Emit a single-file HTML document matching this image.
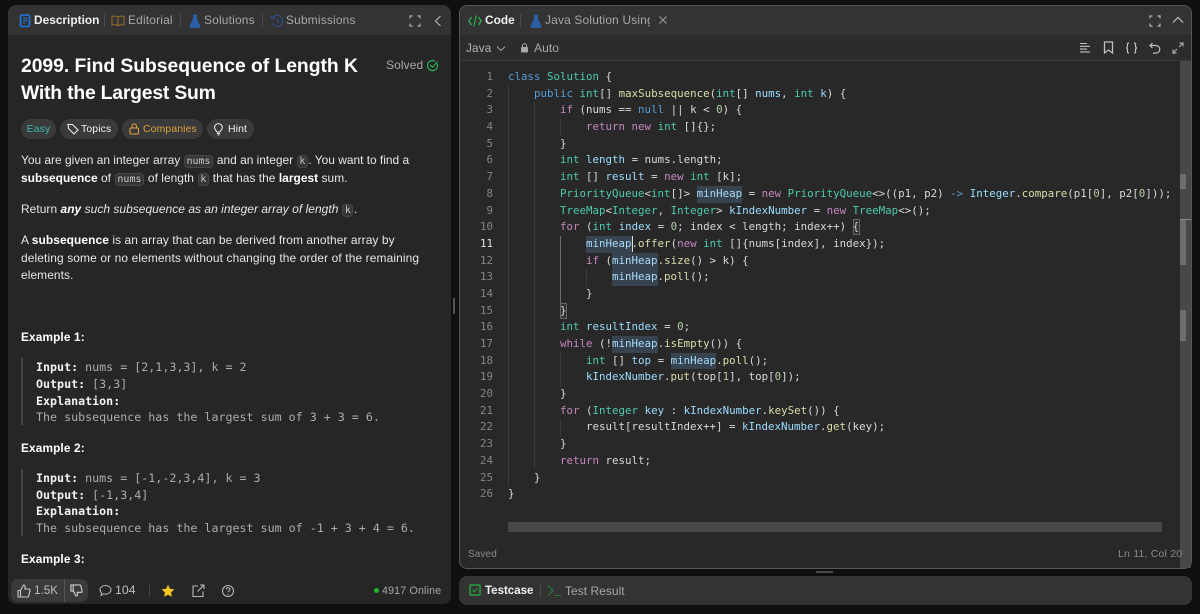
<!DOCTYPE html>
<html><head><meta charset="utf-8"><style>
*{box-sizing:border-box;margin:0;padding:0}
html,body{width:1200px;height:614px;overflow:hidden;background:#0f0f0f;font-family:"Liberation Sans",sans-serif}
.a{position:absolute;white-space:nowrap}
.p{position:absolute;background:#262626;overflow:hidden}
.t{font-size:11.95px;color:#e6e6e6;line-height:18px;letter-spacing:.08px}
.t b{font-weight:700;color:#fff}
.c{font-family:"DejaVu Sans Mono",monospace;font-size:10px;background:#353535;border:1px solid #484848;border-radius:4px;padding:0 1.5px;color:#c8c8c8;margin:0 .5px}
.tab{font-size:11.9px;color:#a8a8a8;top:12px;line-height:16px;letter-spacing:.2px}
.sep{position:absolute;width:1px;height:13px;background:#4a4a4a}
.pill{position:absolute;top:119px;height:20px;border-radius:10px;background:#3a3a3a;font-size:10.4px;line-height:21px;color:#f0f0f0;letter-spacing:.15px}
.m{font-family:"DejaVu Sans Mono",monospace;font-size:11.66px;line-height:16.7px;color:#acacac;left:36px}
.m b{color:#f2f2f2;font-weight:700}
.h{font-size:11.8px;font-weight:700;color:#fff;left:21px;line-height:16px;letter-spacing:.15px}
#code{position:absolute;left:508px;top:69px;font-family:"DejaVu Sans Mono",monospace;font-size:10.8px;line-height:16.68px;color:#d8d8d8;white-space:pre}
#nums{position:absolute;left:469px;width:24px;top:69px;font-family:"DejaVu Sans Mono",monospace;font-size:10.8px;line-height:16.68px;color:#858585;text-align:right;white-space:pre}
i{font-style:normal}
.k{color:#569cd6}.y{color:#4ec9b0}.q{color:#c586c0}.f{color:#dcdcaa}.v{color:#9cdcfe}.n{color:#b5cea8}
.hl{background:#37434e;color:#a6dcfc;display:inline-block}
.g{position:absolute;width:1px;background:#3c3c3c}
svg{position:absolute;overflow:visible;fill:none}
</style></head><body>

<div class="p" style="left:8px;top:5px;width:443px;height:599px;border-radius:8px"></div>
<div class="a" style="left:8px;top:5px;width:443px;height:30px;background:#333;border-radius:8px 8px 0 0"></div>

<svg style="left:19px;top:14px" width="14" height="14" viewBox="0 0 14 14"><rect x="1.500" y="1" width="9" height="11.500" rx="1.500" stroke="#1f78e0" stroke-width="1.600"/><path d="M4 4.300h4M4 6.700h4M4 9h2" stroke="#1f78e0" stroke-width="1.100"/></svg>
<div class="a tab" style="left:34px;color:#f0f0f0;font-weight:700;letter-spacing:0">Description</div>
<div class="sep" style="left:104px;top:14px"></div>
<svg style="left:111px;top:14px" width="14" height="14" viewBox="0 0 14 14"><path d="M7 3.200C5.600 2 3 2 1 2.300v8.600c2-.3 4.600-.3 6 .8 1.400-1.100 4-1.100 6-.8V2.300C11 2 8.400 2 7 3.200zM7 3.200v8.500" stroke="#8f6a2a" stroke-width="1.100"/></svg>
<div class="a tab" style="left:128px">Editorial</div>
<div class="sep" style="left:180px;top:14px"></div>
<svg style="left:188px;top:14px" width="14" height="14" viewBox="0 0 14 14"><path d="M5 1h4M5.500 1v4L2 12.500c-.2.500 0 1 .6 1h8.800c.6 0 .8-.5.6-1L8.500 5V1z" stroke="#2f5ea8" stroke-width="1" fill="#2f5ea8"/></svg>
<div class="a tab" style="left:204px">Solutions</div>
<div class="sep" style="left:262px;top:14px"></div>
<svg style="left:270px;top:14px" width="14" height="14" viewBox="0 0 14 14"><path d="M2.400 4.200A5.500 5.500 0 1 1 2 8.500M1 2l1.200 2.500L5 4M7.500 4.500V7.500L9.500 9" stroke="#2d4f85" stroke-width="1.200"/></svg>
<div class="a tab" style="left:286px">Submissions</div>
<svg style="left:409px;top:15px" width="12" height="12" viewBox="0 0 12 12"><path d="M1 3.500V1h2.500M8.500 1H11v2.500M11 8.500V11H8.500M3.500 11H1V8.500" stroke="#b0b0b0" stroke-width="1.200"/></svg>
<svg style="left:434px;top:15px" width="8" height="12" viewBox="0 0 8 12"><path d="M6.500 1L1.500 6l5 5" stroke="#b0b0b0" stroke-width="1.200"/></svg>

<div class="a" style="left:21px;top:53px;font-size:19.350px;font-weight:700;color:#fff;line-height:26px;letter-spacing:-.05px">2099. Find Subsequence of Length K</div>
<div class="a" style="left:21px;top:80px;font-size:19.350px;font-weight:700;color:#fff;line-height:26px;letter-spacing:-.2px">With the Largest Sum</div>
<div class="a" style="left:386px;top:58px;font-size:12px;color:#a8a8a8;line-height:15px;letter-spacing:.1px">Solved</div>
<svg style="left:426px;top:59px" width="13" height="13" viewBox="0 0 13 13"><path d="M11.200 4.700A5 5 0 1 1 9 2.200M4.200 6l2.200 2.200L11.500 2.800" stroke="#2cbb5d" stroke-width="1.100"/></svg>

<div class="pill" style="left:21px;width:35px;color:#3fb8b0;text-align:center">Easy</div>
<div class="pill" style="left:60px;width:58px;padding-left:21px">Topics</div>
<svg style="left:67px;top:123px" width="12" height="12" viewBox="0 0 12 12"><path d="M1 1.500h4.500L11 7 7 11 1.500 5.500zM3.500 3.700h.1" stroke="#eee" stroke-width="1.100"/></svg>
<div class="pill" style="left:122px;width:81px;padding-left:21px;color:#d9a23c">Companies</div>
<svg style="left:129px;top:123px" width="11" height="12" viewBox="0 0 11 12"><rect x="1" y="5" width="8.500" height="6" rx="1" stroke="#d9a23c" stroke-width="1.100"/><path d="M3 5V3.200a2.200 2.200 0 0 1 4.500 0V5" stroke="#d9a23c" stroke-width="1.100"/></svg>
<div class="pill" style="left:207px;width:47px;padding-left:21px">Hint</div>
<svg style="left:213px;top:123px" width="11" height="13" viewBox="0 0 11 13"><path d="M3.800 9C3.500 7.500 1.500 6.800 1.500 4.500a3.900 3.900 0 0 1 7.800 0C9.300 6.800 7.300 7.500 7 9zM4 10.500h3M4.500 12h2" stroke="#eee" stroke-width="1"/></svg>

<div class="a t" style="left:21px;top:151px;letter-spacing:-.01px">You are given an integer array <span class="c">nums</span> and an integer <span class="c">k</span>. You want to find a</div>
<div class="a t" style="left:21px;top:169px;letter-spacing:.03px"><b>subsequence</b> of <span class="c">nums</span> of length <span class="c">k</span> that has the <b>largest</b> sum.</div>
<div class="a t" style="left:21px;top:200px;letter-spacing:.05px">Return <b><em>any</em></b> <em>such subsequence as an integer array of length</em> <span class="c">k</span>.</div>
<div class="a t" style="left:21px;top:231px">A <b>subsequence</b> is an array that can be derived from another array by</div>
<div class="a t" style="left:21px;top:249px;letter-spacing:.12px">deleting some or no elements without changing the order of the remaining</div>
<div class="a t" style="left:21px;top:266px">elements.</div>

<div class="a h" style="top:329px">Example 1:</div>
<div class="a" style="left:21px;top:358px;width:2px;height:67px;background:#464646"></div>
<div class="a m" style="top:359px"><b>Input:</b> nums = [2,1,3,3], k = 2</div>
<div class="a m" style="top:375.500px"><b>Output:</b> [3,3]</div>
<div class="a m" style="top:392.500px"><b>Explanation:</b></div>
<div class="a m" style="top:409px">The subsequence has the largest sum of 3 + 3 = 6.</div>

<div class="a h" style="top:440px">Example 2:</div>
<div class="a" style="left:21px;top:469px;width:2px;height:67px;background:#464646"></div>
<div class="a m" style="top:470px"><b>Input:</b> nums = [-1,-2,3,4], k = 3</div>
<div class="a m" style="top:486.500px"><b>Output:</b> [-1,3,4]</div>
<div class="a m" style="top:503px"><b>Explanation:</b></div>
<div class="a m" style="top:519.500px">The subsequence has the largest sum of -1 + 3 + 4 = 6.</div>

<div class="a h" style="top:551px">Example 3:</div>

<div class="a" style="left:8px;top:574px;width:443px;height:30px;background:#262626;border-radius:0 0 8px 8px"></div>
<div class="a" style="left:11px;top:579px;width:77px;height:23px;background:#3a3a3a;border-radius:7px"></div>
<div class="a" style="left:64px;top:579px;width:1px;height:23px;background:#555"></div>
<svg style="left:17px;top:584px" width="14" height="14" viewBox="0 0 14 14"><path d="M1 6.500h2.500V13H1zM3.500 6.500L6.500 1c1.200 0 1.800.8 1.600 2L7.700 5H12c.8 0 1.200.7 1 1.400l-1.300 5.400c-.2.700-.6 1.200-1.300 1.200H3.500" stroke="#c8c8c8" stroke-width="1.100"/></svg>
<div class="a" style="left:34px;top:583px;font-size:11.700px;color:#bdbdbd;line-height:15px">1.5K</div>
<svg style="left:70px;top:584px" width="13" height="13" viewBox="0 0 14 14"><path d="M1 1h2.500v6.500H1zM3.500 7.500L6.500 13c1.200 0 1.800-.8 1.600-2L7.700 9H12c.8 0 1.200-.7 1-1.400L11.700 2.200C11.500 1.500 11.100 1 10.400 1H3.500" stroke="#c8c8c8" stroke-width="1.300"/></svg>
<svg style="left:99px;top:584px" width="13" height="13" viewBox="0 0 13 13"><path d="M6.500 1.500c3 0 5.500 1.900 5.500 4.300s-2.500 4.300-5.500 4.300c-.8 0-1.400-.1-2.100-.3L2 11.500l.5-2.700C1.500 8 1 7 1 5.800 1 3.400 3.500 1.500 6.500 1.500z" stroke="#b8b8b8" stroke-width="1"/></svg>
<div class="a" style="left:115px;top:583px;font-size:12.300px;color:#c0c0c0;line-height:15px">104</div>
<div class="a" style="left:149px;top:584px;width:1px;height:13px;background:#444"></div>
<svg style="left:161px;top:584px" width="14" height="14" viewBox="0 0 14 14"><path d="M7 .8l1.900 4 4.400.6-3.200 3 .8 4.400L7 10.700l-3.900 2.100.8-4.400-3.200-3 4.400-.6z" fill="#f7c325"/></svg>
<svg style="left:191px;top:584px" width="14" height="14" viewBox="0 0 14 14"><path d="M7 2H2v10.500h10V7.500M6.500 7.500L13 1M9 1h4v4" stroke="#b8b8b8" stroke-width="1.100"/></svg>
<svg style="left:221px;top:584px" width="14" height="14" viewBox="0 0 14 14"><circle cx="7" cy="7" r="5.500" stroke="#b8b8b8" stroke-width="1.100"/><path d="M5.200 5.500c0-2.300 3.800-2.300 3.800 0 0 1.500-2 1.300-2 2.800M7 9.700v1" stroke="#b8b8b8" stroke-width="1"/></svg>
<div class="a" style="left:374px;top:588px;width:5px;height:5px;border-radius:50%;background:#1ab82f"></div>
<div class="a" style="left:382px;top:584px;font-size:10.600px;color:#a8a8a8;line-height:14px;letter-spacing:.2px">4917 Online</div>
<div class="a" style="left:453px;top:298px;width:2px;height:16px;background:#555"></div>

<div class="p" style="left:459px;top:5px;width:733px;height:564px;border-radius:8px;border:1px solid #565656;background:#282828"></div>
<div class="a" style="left:460px;top:6px;width:731px;height:29px;background:#333;border-radius:7px 7px 0 0"></div>
<div class="a" style="left:460px;top:35px;width:731px;height:25px;background:#2c2c2c"></div>
<div class="a" style="left:460px;top:60px;width:731px;height:1px;background:#3a3a3a"></div>
<svg style="left:468px;top:14px" width="14" height="14" viewBox="0 0 14 14"><path d="M3.500 3L.8 7l2.700 4M10.500 3l2.700 4-2.700 4" stroke="#2cb84a" stroke-width="1.200"/><path d="M8.300 1.500L5.700 12.500" stroke="#2cb84a" stroke-width="1.100"/></svg>
<div class="a tab" style="left:485px;color:#f0f0f0;font-weight:700;letter-spacing:0">Code</div>
<div class="sep" style="left:520px;top:14px"></div>
<svg style="left:529px;top:14px" width="14" height="14" viewBox="0 0 14 14"><path d="M5 1h4M5.500 1v4L2 12.500c-.2.500 0 1 .6 1h8.800c.6 0 .8-.5.6-1L8.500 5V1z" stroke="#2f5ea8" stroke-width="1" fill="#2f5ea8"/></svg>
<div class="a tab" style="left:545px;width:105px;overflow:hidden">Java Solution Using</div>
<svg style="left:658px;top:15px" width="10" height="10" viewBox="0 0 10 10"><path d="M1.500 1.500l7 7M8.500 1.500l-7 7" stroke="#a0a0a0" stroke-width="1"/></svg>
<svg style="left:1149px;top:15px" width="12" height="12" viewBox="0 0 12 12"><path d="M1 3.500V1h2.500M8.500 1H11v2.500M11 8.500V11H8.500M3.500 11H1V8.500" stroke="#b8b8b8" stroke-width="1.200"/></svg>
<svg style="left:1172px;top:16px" width="12" height="8" viewBox="0 0 12 8"><path d="M1 6.500l5-5 5 5" stroke="#c0c0c0" stroke-width="1.200"/></svg>

<div class="a" style="left:466px;top:41px;font-size:11.700px;color:#b4b4b4;line-height:15px;letter-spacing:.2px">Java</div>
<svg style="left:496px;top:45px" width="10" height="7" viewBox="0 0 10 7"><path d="M1 1.500l4 4 4-4" stroke="#a0a0a0" stroke-width="1"/></svg>
<svg style="left:520px;top:43px" width="9" height="10" viewBox="0 0 9 10"><rect x="1" y="4" width="7" height="5.500" rx="1" fill="#a8a8a8"/><path d="M2.500 4V2.800a2 2 0 0 1 4 0V4" stroke="#a8a8a8" stroke-width="1"/></svg>
<div class="a" style="left:534px;top:41px;font-size:12px;color:#a8a8a8;line-height:15px;letter-spacing:.1px">Auto</div>

<svg style="left:1079px;top:42px" width="12" height="12" viewBox="0 0 12 12"><path d="M1 1.500h7M1 4.300h10M1 7.100h7M1 9.900h10" stroke="#c0c0c0" stroke-width="1.100"/></svg>
<svg style="left:1103px;top:41px" width="11" height="13" viewBox="0 0 11 13"><path d="M1.500 1h8v11L5.500 9l-4 3z" stroke="#c0c0c0" stroke-width="1.300"/></svg>
<svg style="left:1125px;top:42px" width="13" height="12" viewBox="0 0 13 12"><path d="M4 1C2 1 2.500 2.500 2.500 4S1.500 6 1 6c.5 0 1.500.5 1.500 2S2 11 4 11M9 1c2 0 1.500 1.500 1.500 3s1 2 1.500 2c-.5 0-1.500.5-1.500 2s.5 3-1.500 3" stroke="#c0c0c0" stroke-width="1.200"/></svg>
<svg style="left:1149px;top:42px" width="12" height="12" viewBox="0 0 12 12"><path d="M3.500 1L1 3.500 3.500 6M1.500 3.500h5.500a3.800 3.800 0 0 1 0 7.600H4" stroke="#c0c0c0" stroke-width="1.200"/></svg>
<svg style="left:1172px;top:42px" width="12" height="12" viewBox="0 0 12 12"><path d="M7 5l4-4M7.500 1H11v3.500M5 7l-4 4M1 7.500V11h3.500" stroke="#a8a8a8" stroke-width="1.200"/></svg>

<div class="g" style="left:508px;top:86px;height:400px"></div>
<div class="g" style="left:534px;top:102px;height:367px"></div>
<div class="g" style="left:560px;top:119px;height:17px"></div>
<div class="g" style="left:560px;top:236px;height:67px;background:#6a6a6a"></div>
<div class="g" style="left:586px;top:269px;height:17px"></div>
<div class="g" style="left:560px;top:353px;height:33px"></div>
<div class="g" style="left:560px;top:419px;height:17px"></div>
<div class="a" style="left:853px;top:219px;width:7px;height:16px;border:1px solid #666;background:#303030"></div>
<div class="a" style="left:560px;top:303px;width:7px;height:16px;border:1px solid #666;background:#303030"></div>

<div id="nums"> 1
 2
 3
 4
 5
 6
 7
 8
 9
10
<span style="color:#e0e0e0">11</span>
12
13
14
15
16
17
18
19
20
21
22
23
24
25
26</div>

<div id="code"><i class="k">class</i> <i class="y">Solution</i> {
    <i class="k">public</i> <i class="y">int</i>[] <i class="f">maxSubsequence</i>(<i class="y">int</i>[] <i class="v">nums</i>, <i class="y">int</i> <i class="v">k</i>) {
        <i class="q">if</i> (nums == <i class="k">null</i> || k &lt; <i class="n">0</i>) {
            <i class="q">return</i> <i class="q">new</i> <i class="y">int</i> []{};
        }
        <i class="y">int</i> <i class="v">length</i> = nums.length;
        <i class="y">int</i> [] <i class="v">result</i> = <i class="q">new</i> <i class="y">int</i> [k];
        <i class="y">PriorityQueue</i>&lt;<i class="y">int</i>[]&gt; <i class="hl">minHeap</i> = <i class="q">new</i> <i class="y">PriorityQueue</i>&lt;&gt;((p1, p2) <i class="k">-&gt;</i> <i class="v">Integer</i>.<i class="f">compare</i>(p1[<i class="n">0</i>], p2[<i class="n">0</i>]));
        <i class="y">TreeMap</i>&lt;<i class="y">Integer</i>, <i class="y">Integer</i>&gt; <i class="v">kIndexNumber</i> = <i class="q">new</i> <i class="y">TreeMap</i>&lt;&gt;();
        <i class="q">for</i> (<i class="y">int</i> <i class="v">index</i> = <i class="n">0</i>; index &lt; length; index++) {
            <i class="hl">minHeap</i>.<i class="f">offer</i>(<i class="q">new</i> <i class="y">int</i> []{nums[index], index});
            <i class="q">if</i> (<i class="hl">minHeap</i>.<i class="f">size</i>() &gt; k) {
                <i class="hl">minHeap</i>.<i class="f">poll</i>();
            }
        }
        <i class="y">int</i> <i class="v">resultIndex</i> = <i class="n">0</i>;
        <i class="q">while</i> (!<i class="hl">minHeap</i>.<i class="f">isEmpty</i>()) {
            <i class="y">int</i> [] <i class="v">top</i> = <i class="hl">minHeap</i>.<i class="f">poll</i>();
            <i class="v">kIndexNumber</i>.<i class="f">put</i>(top[<i class="n">1</i>], top[<i class="n">0</i>]);
        }
        <i class="q">for</i> (<i class="y">Integer</i> <i class="v">key</i> : <i class="v">kIndexNumber</i>.<i class="f">keySet</i>()) {
            result[resultIndex++] = <i class="v">kIndexNumber</i>.<i class="f">get</i>(key);
        }
        <i class="q">return</i> result;
    }
}</div>
<div class="a" style="left:632px;top:236px;width:1px;height:16px;background:#e0e0e0"></div>

<div class="a" style="left:1180px;top:61px;width:11px;height:507px;background:#484848"></div>
<div class="a" style="left:1180px;top:174px;width:6px;height:15px;background:#6e6e6e"></div>
<div class="a" style="left:1180px;top:219px;width:6px;height:46px;background:#6e6e6e"></div>
<div class="a" style="left:1180px;top:219px;width:11px;height:1px;background:#888"></div>
<div class="a" style="left:1180px;top:310px;width:6px;height:31px;background:#6e6e6e"></div>
<div class="a" style="left:508px;top:522px;width:654px;height:10px;background:#484848"></div>
<div class="a" style="left:468px;top:547.500px;font-size:10px;color:#8a8a8a;line-height:14px;letter-spacing:.1px">Saved</div>
<div class="a" style="left:1118px;top:547px;font-size:10.500px;color:#8a8a8a;line-height:14px;letter-spacing:.2px">Ln 11, Col 20</div>
<div class="a" style="left:816px;top:571px;width:17px;height:2px;background:#4a4a4a"></div>

<div class="a" style="left:459px;top:576px;width:733px;height:29px;background:#333;border-radius:8px"></div>
<svg style="left:469px;top:584px" width="12" height="12" viewBox="0 0 12 12"><rect x="1" y="1" width="10" height="10" rx="1" stroke="#2a9e3f" stroke-width="1.500"/><path d="M3.500 6l1.800 1.800L8.600 4.400" stroke="#2a9e3f" stroke-width="1.100"/></svg>
<div class="a tab" style="left:485px;top:583px;font-size:11.500px;color:#f0f0f0;font-weight:700;letter-spacing:0">Testcase</div>
<div class="sep" style="left:540px;top:584px"></div>
<svg style="left:547px;top:585px" width="14" height="11" viewBox="0 0 14 11"><path d="M1 .5l5 5-5 5M7.500 10.500H14" stroke="#2b7a3d" stroke-width="1.100"/></svg>
<div class="a tab" style="left:565px;top:583px;letter-spacing:.08px">Test Result</div>
</body></html>
